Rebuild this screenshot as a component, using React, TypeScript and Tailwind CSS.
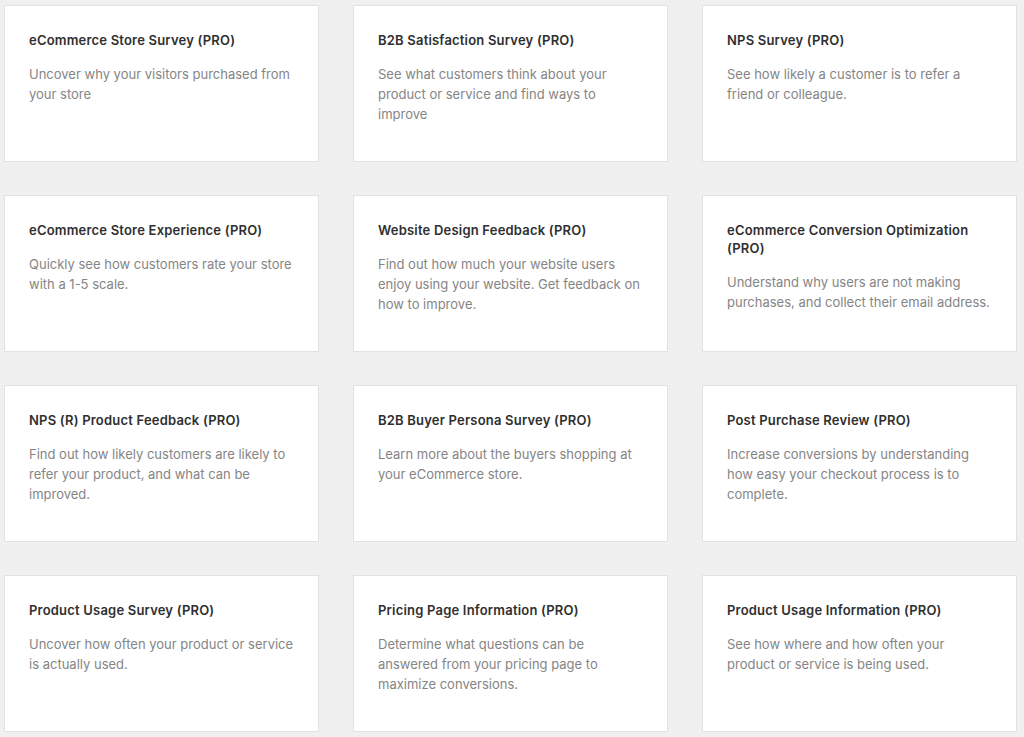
import React from "react";

const items: { title: string; desc: string }[] = [
  { title: "eCommerce Store Survey (PRO)", desc: "Uncover why your visitors purchased from your store" },
  { title: "B2B Satisfaction Survey (PRO)", desc: "See what customers think about your product or service and find ways to improve" },
  { title: "NPS Survey (PRO)", desc: "See how likely a customer is to refer a friend or colleague." },
  { title: "eCommerce Store Experience (PRO)", desc: "Quickly see how customers rate your store with a 1-5 scale." },
  { title: "Website Design Feedback (PRO)", desc: "Find out how much your website users enjoy using your website. Get feedback on how to improve." },
  { title: "eCommerce Conversion Optimization (PRO)", desc: "Understand why users are not making purchases, and collect their email address." },
  { title: "NPS (R) Product Feedback (PRO)", desc: "Find out how likely customers are likely to refer your product, and what can be improved." },
  { title: "B2B Buyer Persona Survey (PRO)", desc: "Learn more about the buyers shopping at your eCommerce store." },
  { title: "Post Purchase Review (PRO)", desc: "Increase conversions by understanding how easy your checkout process is to complete." },
  { title: "Product Usage Survey (PRO)", desc: "Uncover how often your product or service is actually used." },
  { title: "Pricing Page Information (PRO)", desc: "Determine what questions can be answered from your pricing page to maximize conversions." },
  { title: "Product Usage Information (PRO)", desc: "See how where and how often your product or service is being used." },
];

export default function App() {
  return (
    <div className="min-h-[737px] w-[1024px] bg-[#f0f0f0] pl-[4px] pt-[5px] font-['Inter',sans-serif]">
      <div className="grid grid-cols-[315px_315px_315px] gap-x-[34px] gap-y-[33px]">
        {items.map((it) => (
          <div
            key={it.title}
            className="h-[157px] border border-[#e2e2e2] bg-white px-[24px] pt-[25px]"
          >
            <h3 className="text-[13px] font-semibold leading-[18px] tracking-[0.2px] text-[#2f2f2f]">{it.title}</h3>
            <p className="mt-[15px] text-[13px] leading-[20px] text-[#858585]">{it.desc}</p>
          </div>
        ))}
      </div>
    </div>
  );
}
